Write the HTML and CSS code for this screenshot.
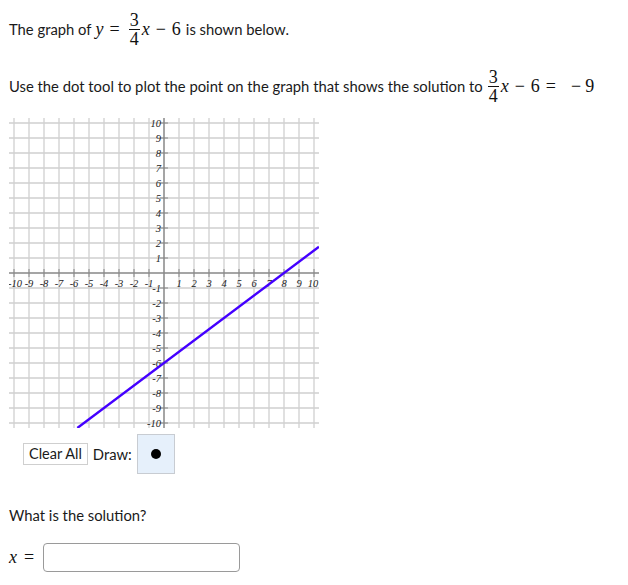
FILE: index.html
```html
<!DOCTYPE html>
<html>
<head>
<meta charset="utf-8">
<link rel="stylesheet" href="styles.css">
</head>
<body>
<div class="page">
  <p class="line line1">The graph of <span class="mx"><var class="mv">y</var><span class="op">=</span><span class="frac"><span class="num">3</span><span class="den">4</span></span><var class="mv">x</var><span class="op">−</span><span class="mn">6</span></span> is shown below.</p>
  <p class="line line2">Use the dot tool to plot the point on the graph that shows the solution to <span class="mx"><span class="frac"><span class="num">3</span><span class="den">4</span></span><var class="mv">x</var><span class="op">−</span><span class="mn">6</span><span class="op">=</span><span class="neg">−</span><span class="mn">9</span></span></p>

  <div class="graph">
    <svg width="310" height="310" viewBox="0 0 310 310" xmlns="http://www.w3.org/2000/svg">
      <path class="grid" d="M5 0V310M20 0V310M35 0V310M50 0V310M65 0V310M80 0V310M95 0V310M110 0V310M125 0V310M140 0V310M170 0V310M185 0V310M200 0V310M215 0V310M230 0V310M245 0V310M260 0V310M275 0V310M290 0V310M305 0V310M0 5H310M0 20H310M0 35H310M0 50H310M0 65H310M0 80H310M0 95H310M0 110H310M0 125H310M0 140H310M0 170H310M0 185H310M0 200H310M0 215H310M0 230H310M0 245H310M0 260H310M0 275H310M0 290H310M0 305H310"/>
      <path class="axis" d="M0 155H310M155 0V310"/>
      <path class="tick" d="M5 151V159M20 151V159M35 151V159M50 151V159M65 151V159M80 151V159M95 151V159M110 151V159M125 151V159M140 151V159M170 151V159M185 151V159M200 151V159M215 151V159M230 151V159M245 151V159M260 151V159M275 151V159M290 151V159M305 151V159M151 5H159M151 20H159M151 35H159M151 50H159M151 65H159M151 80H159M151 95H159M151 110H159M151 125H159M151 140H159M151 170H159M151 185H159M151 200H159M151 215H159M151 230H159M151 245H159M151 260H159M151 275H159M151 290H159M151 305H159"/>
      <g class="xl">
        <text x="6" y="169">-10</text><text x="20" y="169">-9</text><text x="35" y="169">-8</text><text x="50" y="169">-7</text><text x="65" y="169">-6</text><text x="80" y="169">-5</text><text x="95" y="169">-4</text><text x="110" y="169">-3</text><text x="125" y="169">-2</text><text x="140" y="169">-1</text>
        <text x="170" y="169">1</text><text x="185" y="169">2</text><text x="200" y="169">3</text><text x="215" y="169">4</text><text x="230" y="169">5</text><text x="245" y="169">6</text><text x="260" y="169">7</text><text x="275" y="169">8</text><text x="290" y="169">9</text><text x="304" y="169">10</text>
      </g>
      <g class="yl">
        <text x="152" y="8.5">10</text><text x="152" y="23.5">9</text><text x="152" y="38.5">8</text><text x="152" y="53.5">7</text><text x="152" y="68.5">6</text><text x="152" y="83.5">5</text><text x="152" y="98.5">4</text><text x="152" y="113.5">3</text><text x="152" y="128.5">2</text><text x="152" y="143.5">1</text>
        <text x="152" y="173.5">-1</text><text x="152" y="188.5">-2</text><text x="152" y="203.5">-3</text><text x="152" y="218.5">-4</text><text x="152" y="233.5">-5</text><text x="152" y="248.5">-6</text><text x="152" y="263.5">-7</text><text x="152" y="278.5">-8</text><text x="152" y="293.5">-9</text><text x="152" y="308.5">-10</text>
      </g>
      <path class="plot" d="M68.33 310L310 128.75"/>
    </svg>
  </div>

  <div class="tools">
    <button class="clear">Clear All</button>
    <span class="draw-label">Draw:</span>
    <span class="draw-tool"><span class="dot"></span></span>
  </div>

  <p class="question">What is the solution?</p>

  <div class="answer">
    <span class="mx"><var class="mv">x</var><span class="op">=</span></span>
    <span class="input"></span>
  </div>
</div>
</body>
</html>
```

FILE: styles.css
```css
html, body {
  margin: 0;
  padding: 0;
  background: #fff;
}
.page {
  font-family: Lato, "Noto Sans", sans-serif;
  font-size: 14.8px;
  color: #1a1a1a;
  padding: 0 0 0 9px;
}
.line {
  margin: 0;
  display: flex;
  align-items: center;
  white-space: nowrap;
}
.line1 {
  height: 44px;
  padding-top: 7px;
}
.line2 {
  height: 44px;
  margin-top: 13px;
}
.mx {
  display: inline-flex;
  align-items: center;
  font-family: "Times New Roman", "Liberation Serif", "DejaVu Serif", serif;
  font-size: 18px;
  color: #111;
}
.mx span,
.mx var {
  font-family: "Times New Roman", "Liberation Serif", "DejaVu Serif", serif;
}
.line .mx {
  margin-left: 4px;
}
.line1 .mx {
  margin-right: 5px;
}
.mv {
  font-style: italic;
}
.op {
  margin: 0 6px;
}
.neg {
  margin: 0 4px 0 9px;
}
.frac {
  display: inline-flex;
  flex-direction: column;
  align-items: center;
  margin: 0 2px 0 3px;
  line-height: 16px;
}
.line2 .frac {
  margin-left: 1px;
}
.num {
  border-bottom: 1px solid #111;
  padding: 0 1px 1px;
}
.den {
  padding-top: 1px;
}
.graph {
  margin-top: 10px;
  height: 310px;
}
.graph svg {
  display: block;
}
.grid {
  stroke: #d0d0d0;
  stroke-width: 1.3;
  fill: none;
}
.axis {
  stroke: #888;
  stroke-width: 1.5;
  fill: none;
}
.tick {
  stroke: #888;
  stroke-width: 1;
  fill: none;
}
.xl text, .yl text {
  font-family: "Liberation Serif", serif;
  font-style: italic;
  font-size: 10.5px;
  fill: #222;
}
.xl text {
  text-anchor: middle;
}
.yl text {
  text-anchor: end;
}
.plot {
  stroke: #4400ff;
  stroke-width: 2.4;
  fill: none;
}
.tools {
  display: flex;
  align-items: center;
  margin-top: 6px;
  padding-left: 14px;
  height: 39px;
}
.clear {
  font-family: Lato, "Noto Sans", sans-serif;
  font-size: 14.5px;
  color: #1a1a1a;
  background: #fff;
  border: 1px solid #cfcfcf;
  border-radius: 0;
  height: 22px;
  padding: 0 5px;
  margin: 0;
}
.draw-label {
  margin-left: 5px;
}
.draw-tool {
  margin-left: 5px;
  width: 36px;
  height: 38px;
  background: #e6f0fb;
  border: 1px solid #c8ccd2;
  display: flex;
  align-items: center;
  justify-content: center;
}
.dot {
  width: 10px;
  height: 10px;
  border-radius: 50%;
  background: #000;
}
.question {
  margin: 34px 0 0;
  line-height: 17px;
}
.answer {
  display: flex;
  align-items: center;
  margin-top: 19px;
}
.answer .mx {
  width: 34px;
}
.answer .op {
  margin-left: 7px;
}
.input {
  display: block;
  width: 195px;
  height: 27px;
  border: 1px solid #9a9a9a;
  border-radius: 4px;
  background: #fff;
}
```
